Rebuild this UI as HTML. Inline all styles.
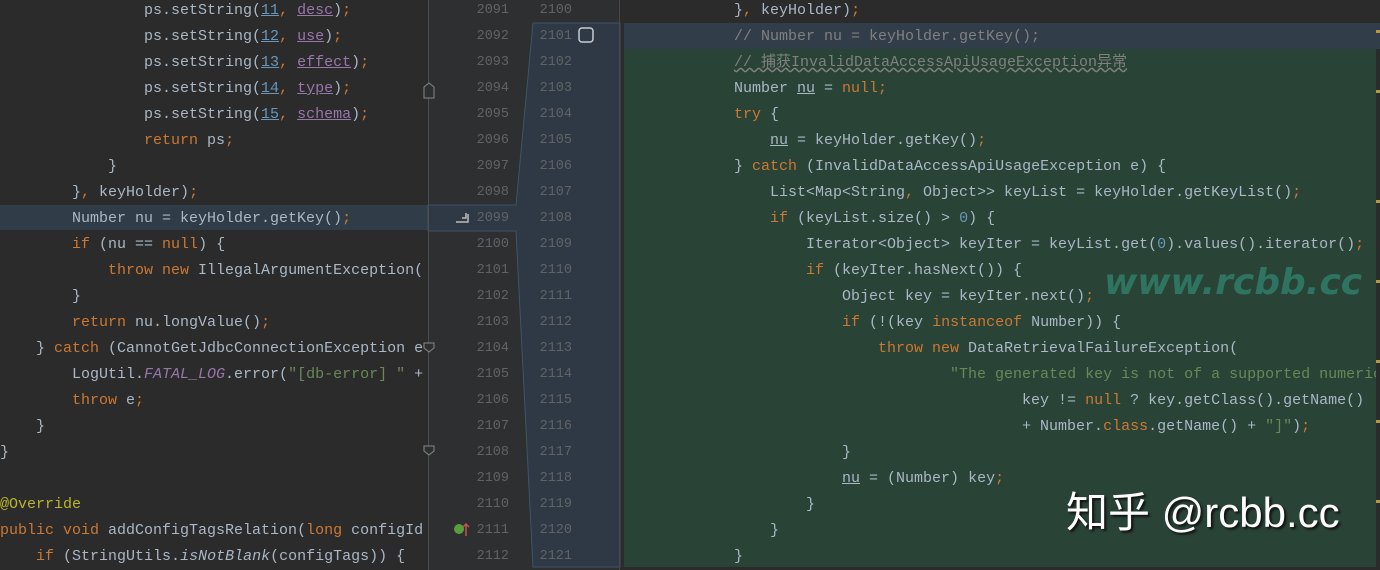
<!DOCTYPE html>
<html><head><meta charset="utf-8"><style>
*{margin:0;padding:0;box-sizing:border-box}
body{width:1380px;height:570px;overflow:hidden;background:#2b2b2b;position:relative;font-family:"Liberation Mono","Noto Sans CJK SC",monospace;font-size:15px;color:#a9b7c6}
.code{position:absolute;white-space:pre;line-height:26px}
.ln{position:absolute;white-space:pre;line-height:26px;font-size:13.5px;color:#606366;text-align:right;width:40px}
.k{color:#cc7832}.n{color:#6897bb}.f{color:#9876aa}.s{color:#6a8759}.c{color:#808080}.a{color:#bbb529}
.u{text-decoration:underline}.i{font-style:italic}
</style></head><body>
<div style="position:absolute;left:624px;top:49px;width:752px;height:518px;background:#294336"></div>
<div style="position:absolute;left:624px;top:23px;width:756px;height:26px;background:#313d49"></div>
<div style="position:absolute;left:0;top:205px;width:516px;height:25px;background:#303c48"></div>
<div style="position:absolute;left:428px;top:0;width:192px;height:570px;background:#2d2f30"></div>
<svg style="position:absolute;left:0;top:0" width="1380" height="570">
<polygon points="533,23 620,23 620,567 533,567 516,231 428,231 428,205 516,205" fill="#2f3945" stroke="#3f5466" stroke-width="1"/>
<line x1="428.5" y1="0" x2="428.5" y2="570" stroke="#4a4c4e"/>
<line x1="619.5" y1="0" x2="619.5" y2="570" stroke="#45494d"/>
<rect x="579" y="28" width="14" height="14" rx="3" fill="none" stroke="#c8ccd0" stroke-width="1.5"/>
<path d="M456 222h12v-8M462 218h4v-5" fill="none" stroke="#bbb" stroke-width="1.5"/>
<path d="M424 92v-5l5-4 5 4v11h-10z" fill="#2d2f30" stroke="#888" stroke-width="1"/>
<path d="M424 343h10v5l-5 4-5-4z" fill="#2d2f30" stroke="#888"/>
<path d="M424 446h10v5l-5 4-5-4z" fill="#2d2f30" stroke="#888"/>
<circle cx="459" cy="529" r="5" fill="#5a9e3a"/>
<path d="M466 536v-12M463 527l3-3 3 3" stroke="#c75450" stroke-width="1.5" fill="none"/>
<rect x="1376" y="30" width="4" height="3" fill="#b39a3a"/><rect x="1376" y="90" width="4" height="3" fill="#b39a3a"/><rect x="1376" y="200" width="4" height="3" fill="#b39a3a"/><rect x="1376" y="280" width="4" height="3" fill="#b39a3a"/><rect x="1376" y="360" width="4" height="3" fill="#b39a3a"/><rect x="1376" y="420" width="4" height="3" fill="#b39a3a"/><rect x="1376" y="500" width="4" height="3" fill="#b39a3a"/>
</svg>
<div class="ln" style="left:469px;top:-2px">2091
2092
2093
2094
2095
2096
2097
2098
2099
2100
2101
2102
2103
2104
2105
2106
2107
2108
2109
2110
2111
2112</div>
<div class="ln" style="left:532px;top:-2px">2100
2101
2102
2103
2104
2105
2106
2107
2108
2109
2110
2111
2112
2113
2114
2115
2116
2117
2118
2119
2120
2121</div>
<div class="code" style="left:0;top:-2px;width:426px;overflow:hidden">                ps.setString(<span class="n u">11</span><span class="k">,</span> <span class="f u">desc</span>)<span class="k">;</span>
                ps.setString(<span class="n u">12</span><span class="k">,</span> <span class="f u">use</span>)<span class="k">;</span>
                ps.setString(<span class="n u">13</span><span class="k">,</span> <span class="f u">effect</span>)<span class="k">;</span>
                ps.setString(<span class="n u">14</span><span class="k">,</span> <span class="f u">type</span>)<span class="k">;</span>
                ps.setString(<span class="n u">15</span><span class="k">,</span> <span class="f u">schema</span>)<span class="k">;</span>
                <span class="k">return</span> ps<span class="k">;</span>
            }
        }<span class="k">,</span> keyHolder)<span class="k">;</span>
        Number nu = keyHolder.getKey()<span class="k">;</span>
        <span class="k">if</span> (nu == <span class="k">null</span>) {
            <span class="k">throw new</span> IllegalArgumentException(
        }
        <span class="k">return</span> nu.longValue()<span class="k">;</span>
    } <span class="k">catch</span> (CannotGetJdbcConnectionException e
        LogUtil.<span class="f i">FATAL_LOG</span>.error(<span class="s">"[db-error] "</span> +
        <span class="k">throw</span> e<span class="k">;</span>
    }
}

<span class="a">@Override</span>
<span class="k">public void</span> addConfigTagsRelation(<span class="k">long</span> configId
    <span class="k">if</span> (StringUtils.<span class="i">isNotBlank</span>(configTags)) {</div>
<div class="code" style="left:734px;top:-2px;width:642px;overflow:hidden">}<span class="k">,</span> keyHolder)<span class="k">;</span>
<span class="c">// Number nu = keyHolder.getKey();</span>
<span class="c" style="text-decoration:underline wavy #808080">// 捕获InvalidDataAccessApiUsageException异常</span>
Number <span class="u">nu</span> = <span class="k">null;</span>
<span class="k">try</span> {
    <span class="u">nu</span> = keyHolder.getKey()<span class="k">;</span>
} <span class="k">catch</span> (InvalidDataAccessApiUsageException e) {
    List&lt;Map&lt;String<span class="k">,</span> Object&gt;&gt; keyList = keyHolder.getKeyList()<span class="k">;</span>
    <span class="k">if</span> (keyList.size() &gt; <span class="n">0</span>) {
        Iterator&lt;Object&gt; keyIter = keyList.get(<span class="n">0</span>).values().iterator()<span class="k">;</span>
        <span class="k">if</span> (keyIter.hasNext()) {
            Object key = keyIter.next()<span class="k">;</span>
            <span class="k">if</span> (!(key <span class="k">instanceof</span> Number)) {
                <span class="k">throw new</span> DataRetrievalFailureException(
                        <span class="s">"The generated key is not of a supported numeric type. "</span>
                                key != <span class="k">null</span> ? key.getClass().getName() :
                                + Number.<span class="k">class</span>.getName() + <span class="s">"]"</span>)<span class="k">;</span>
            }
            <span class="u">nu</span> = (Number) key<span class="k">;</span>
        }
    }
}</div>
<div style="position:absolute;left:1104px;top:262px;font-family:'DejaVu Sans',sans-serif;font-style:italic;font-weight:bold;font-size:36px;color:#2f7a66;white-space:nowrap;opacity:.9">www.rcbb.cc</div>
<div style="position:absolute;left:1066px;top:479px;font-family:'Liberation Sans','Noto Sans CJK SC',sans-serif;font-size:42px;color:#fff;text-shadow:2px 2px 2px #111;white-space:nowrap">知乎 @rcbb.cc</div>
</body></html>
